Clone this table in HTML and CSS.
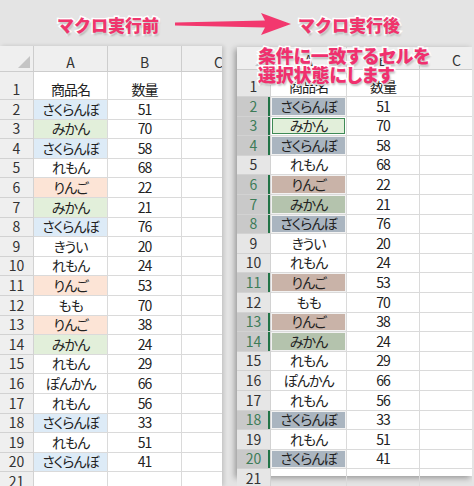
FILE: index.html
```html
<!DOCTYPE html>
<html lang="ja">
<head>
<meta charset="utf-8">
<link rel="stylesheet" href="styles.css">
</head>
<body>
<div class="banner">
  <span class="title">マクロ実行前</span>
  <svg class="arrow" width="116" height="24" viewBox="0 0 116 24"><polygon points="0,10.6 90,8.6 86,1 116,12 86,23 90,15.4 0,13.4" fill="#f2386e"/></svg>
  <span class="title">マクロ実行後</span>
</div>
<div class="sheets">
  <div class="sheet before">
    <div class="corner"></div><div class="ch">A</div><div class="ch">B</div><div class="ch">C</div>
    <div class="rh r1">1</div><div class="c r1">商品名</div><div class="c r1">数量</div><div class="c r1"></div>
    <div class="rh">2</div><div class="c blue">さくらんぼ</div><div class="c">51</div><div class="c"></div>
    <div class="rh">3</div><div class="c green">みかん</div><div class="c">70</div><div class="c"></div>
    <div class="rh">4</div><div class="c blue">さくらんぼ</div><div class="c">58</div><div class="c"></div>
    <div class="rh">5</div><div class="c">れもん</div><div class="c">68</div><div class="c"></div>
    <div class="rh">6</div><div class="c peach">りんご</div><div class="c">22</div><div class="c"></div>
    <div class="rh">7</div><div class="c green">みかん</div><div class="c">21</div><div class="c"></div>
    <div class="rh">8</div><div class="c blue">さくらんぼ</div><div class="c">76</div><div class="c"></div>
    <div class="rh">9</div><div class="c">きうい</div><div class="c">20</div><div class="c"></div>
    <div class="rh">10</div><div class="c">れもん</div><div class="c">24</div><div class="c"></div>
    <div class="rh">11</div><div class="c peach">りんご</div><div class="c">53</div><div class="c"></div>
    <div class="rh">12</div><div class="c">もも</div><div class="c">70</div><div class="c"></div>
    <div class="rh">13</div><div class="c peach">りんご</div><div class="c">38</div><div class="c"></div>
    <div class="rh">14</div><div class="c green">みかん</div><div class="c">24</div><div class="c"></div>
    <div class="rh">15</div><div class="c">れもん</div><div class="c">29</div><div class="c"></div>
    <div class="rh">16</div><div class="c">ぽんかん</div><div class="c">66</div><div class="c"></div>
    <div class="rh">17</div><div class="c">れもん</div><div class="c">56</div><div class="c"></div>
    <div class="rh">18</div><div class="c blue">さくらんぼ</div><div class="c">33</div><div class="c"></div>
    <div class="rh">19</div><div class="c">れもん</div><div class="c">51</div><div class="c"></div>
    <div class="rh">20</div><div class="c blue">さくらんぼ</div><div class="c">41</div><div class="c"></div>
    <div class="rh">21</div><div class="c"></div><div class="c"></div><div class="c"></div>
  </div>
  <div class="sheet after">
    <div class="corner"></div><div class="ch">A</div><div class="ch">B</div><div class="ch">C</div>
    <div class="rh r1">1</div><div class="c r1">商品名</div><div class="c r1">数量</div><div class="c r1"></div>
    <div class="rh on">2</div><div class="c s-blue">さくらんぼ</div><div class="c">51</div><div class="c"></div>
    <div class="rh on">3</div><div class="c active">みかん</div><div class="c">70</div><div class="c"></div>
    <div class="rh on">4</div><div class="c s-blue">さくらんぼ</div><div class="c">58</div><div class="c"></div>
    <div class="rh">5</div><div class="c">れもん</div><div class="c">68</div><div class="c"></div>
    <div class="rh on">6</div><div class="c s-peach">りんご</div><div class="c">22</div><div class="c"></div>
    <div class="rh on">7</div><div class="c s-green">みかん</div><div class="c">21</div><div class="c"></div>
    <div class="rh on">8</div><div class="c s-blue">さくらんぼ</div><div class="c">76</div><div class="c"></div>
    <div class="rh">9</div><div class="c">きうい</div><div class="c">20</div><div class="c"></div>
    <div class="rh">10</div><div class="c">れもん</div><div class="c">24</div><div class="c"></div>
    <div class="rh on">11</div><div class="c s-peach">りんご</div><div class="c">53</div><div class="c"></div>
    <div class="rh">12</div><div class="c">もも</div><div class="c">70</div><div class="c"></div>
    <div class="rh on">13</div><div class="c s-peach">りんご</div><div class="c">38</div><div class="c"></div>
    <div class="rh on">14</div><div class="c s-green">みかん</div><div class="c">24</div><div class="c"></div>
    <div class="rh">15</div><div class="c">れもん</div><div class="c">29</div><div class="c"></div>
    <div class="rh">16</div><div class="c">ぽんかん</div><div class="c">66</div><div class="c"></div>
    <div class="rh">17</div><div class="c">れもん</div><div class="c">56</div><div class="c"></div>
    <div class="rh on">18</div><div class="c s-blue">さくらんぼ</div><div class="c">33</div><div class="c"></div>
    <div class="rh">19</div><div class="c">れもん</div><div class="c">51</div><div class="c"></div>
    <div class="rh on">20</div><div class="c s-blue">さくらんぼ</div><div class="c">41</div><div class="c"></div>
    <div class="rh">21</div><div class="c"></div><div class="c"></div><div class="c"></div>
    <div class="note">条件に一致するセルを<br>選択状態にします</div>
  </div>
</div>
</body>
</html>
```

FILE: styles.css
```css
* { box-sizing: border-box; margin: 0; padding: 0; }
html, body { width: 474px; height: 486px; overflow: hidden; }
body {
  background: #e4e4e4;
  font-family: "Noto Sans CJK JP", sans-serif;
  color: #222;
}
.banner {
  height: 46px;
  display: flex;
  align-items: center;
  padding-left: 57px;
  padding-top: 2px;
}
.title {
  font-size: 17px;
  font-weight: 900;
  line-height: 1;
  color: #f0346c;
  -webkit-text-stroke: 3px #fff;
  paint-order: stroke fill;
  text-shadow: 1px 2px 2px rgba(0,0,0,.25);
}
.arrow { margin-left: 16px; margin-right: 7px; }
.sheets {
  display: flex;
  align-items: flex-start;
  gap: 15px;
}
.sheet {
  display: grid;
  background: #fff;
  position: relative;
  overflow: hidden;
  font-feature-settings: "palt";
}
.before {
  width: 222px;
  height: 440px;
  grid-template-columns: 34px 74px 74px 74px;
  grid-template-rows: 26px 28px repeat(20, 19.6px);
  box-shadow: 2px 0 4px rgba(0,0,0,.15);
}
.after {
  width: 235px;
  height: 429px;
  margin-top: 1px;
  grid-template-columns: 34px 76px 73px 74px;
  grid-template-rows: 23px 27px repeat(20, 19.6px);
  overflow: visible;
  box-shadow: -2px 2px 6px rgba(0,0,0,.35);
  clip-path: inset(-10px 0 -10px -10px);
}
.c, .rh, .ch, .corner {
  display: flex;
  align-items: flex-end;
  justify-content: center;
  font-size: 14px;
  line-height: 1;
  padding-bottom: 3px;
  white-space: nowrap;
  overflow: hidden;
  border-right: 1px solid #dadada;
  border-bottom: 1px solid #dadada;
}
.c { letter-spacing: -1px; }
.ch, .corner {
  background: #efefef;
  border-color: #cdcdcd;
  color: #333;
  padding-bottom: 2px;
}
.corner { position: relative; }
.corner::after {
  content: "";
  position: absolute;
  right: 3px;
  bottom: 3px;
  width: 12px;
  height: 12px;
  background: #c4c4c4;
  clip-path: polygon(100% 0, 100% 100%, 0 100%);
}
.rh {
  background: #efefef;
  border-color: #d2d2d2;
  color: #333;
}
.after .rh { background: #e6e6e6; }
.after .rh.on {
  background: #c9c9c9;
  color: #3d7c58;
  box-shadow: inset -2px 0 0 #217346;
}
.blue { background: #ddebf7; }
.green { background: #e2efda; }
.peach { background: #fce4d6; }
.s-blue { background: #aab5c0; box-shadow: inset 0 0 0 1px #f2f2f2; }
.s-green { background: #b4c3ad; box-shadow: inset 0 0 0 1px #f2f2f2; }
.s-peach { background: #c9b3a8; box-shadow: inset 0 0 0 1px #f2f2f2; }
.active {
  background: #e2efda;
  box-shadow: inset 0 0 0 1px #fff, inset 0 0 0 2px #3f8a56;
}
.note {
  position: absolute;
  left: 21px;
  top: -1px;
  font-size: 18px;
  line-height: 19px;
  font-weight: 900;
  color: #f0306e;
  -webkit-text-stroke: 3px #fff;
  paint-order: stroke fill;
  text-shadow: 1px 2px 2px rgba(0,0,0,.25);
  letter-spacing: -0.2px;
}
```
